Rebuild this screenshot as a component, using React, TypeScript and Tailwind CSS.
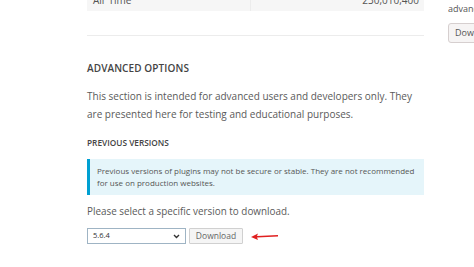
import React from "react";

export default function App() {
  return (
    <div className="w-[474px] h-[267px] overflow-hidden bg-white" style={{ fontFamily: '"Open Sans", "Noto Sans", sans-serif' }}>
      <div className="flex pl-[87px] gap-[24px]">
        {/* main column */}
        <div className="w-[337px] shrink-0 flex flex-col">
          {/* table row cut off */}
          <div className="-mt-[11px] h-[22px] bg-[#f6f6f6] flex text-[10px] text-[#555] leading-[22px]">
            <div className="w-[164px] border-r border-[#ececec] pl-[6px]">Air Time</div>
            <div className="flex-1 text-right pr-[5px]">230,010,400</div>
          </div>
          <div className="mt-[24px] h-px bg-[#ececec]" />
          {/* advanced options */}
          <div className="mt-[25px] text-[10px] font-semibold text-[#444] tracking-[0.1px] leading-[14px]">ADVANCED OPTIONS</div>
          <p className="mt-[12px] text-[10px] text-[#5a5a5a] leading-[18px]">
            This section is intended for advanced users and developers only. They are presented here for testing and educational purposes.
          </p>
          <div className="mt-[14px] text-[8.3px] font-semibold text-[#444] leading-[12px]">PREVIOUS VERSIONS</div>
          <div className="mt-[10px] h-[36px] bg-[#e5f5fa] border-l-[3px] border-[#00a0d2] pl-[7px] pr-[3px] flex items-center">
            <p className="text-[8px] text-[#555] leading-[12px]">
              Previous versions of plugins may not be secure or stable. They are not recommended for use on production websites.
            </p>
          </div>
          <p className="mt-[8px] text-[9.9px] text-[#5a5a5a] leading-[16px]">Please select a specific version to download.</p>
          <div className="mt-[9px] flex items-center gap-[3px]">
            <div className="w-[99px] h-[16px] border border-[#9fb4c4] bg-white flex items-center justify-between pl-[5px] pr-[5px] text-[7.5px] text-[#333]">
              <span>5.6.4</span>
              <svg width="7" height="5" viewBox="0 0 7 5" fill="none">
                <path d="M1 1l2.5 2.5L6 1" stroke="#333" strokeWidth="1.4" />
              </svg>
            </div>
            <div className="w-[54px] h-[16px] border border-[#d0d0d0] bg-[#f5f5f5] rounded-[1px] flex items-center justify-center text-[8.5px] text-[#666]">
              Download
            </div>
            <svg width="30" height="8" viewBox="0 0 30 8" className="ml-[4px]">
              <path d="M1 5 L8 1.5 L7 4 L28 3 L28 4.6 L7 5.6 L8 8 Z" fill="#e02020" />
            </svg>
          </div>
        </div>
        {/* sidebar */}
        <div className="flex-1 overflow-hidden">
          <div className="mt-[3px] text-[9px] text-[#555] leading-[12px] whitespace-nowrap">advanced</div>
          <div className="mt-[8px] w-[60px] h-[20px] border border-[#d6cfcf] bg-[#f6f4f4] rounded-[3px] flex items-center pl-[6px] text-[9px] text-[#555]">
            Download
          </div>
        </div>
      </div>
    </div>
  );
}
